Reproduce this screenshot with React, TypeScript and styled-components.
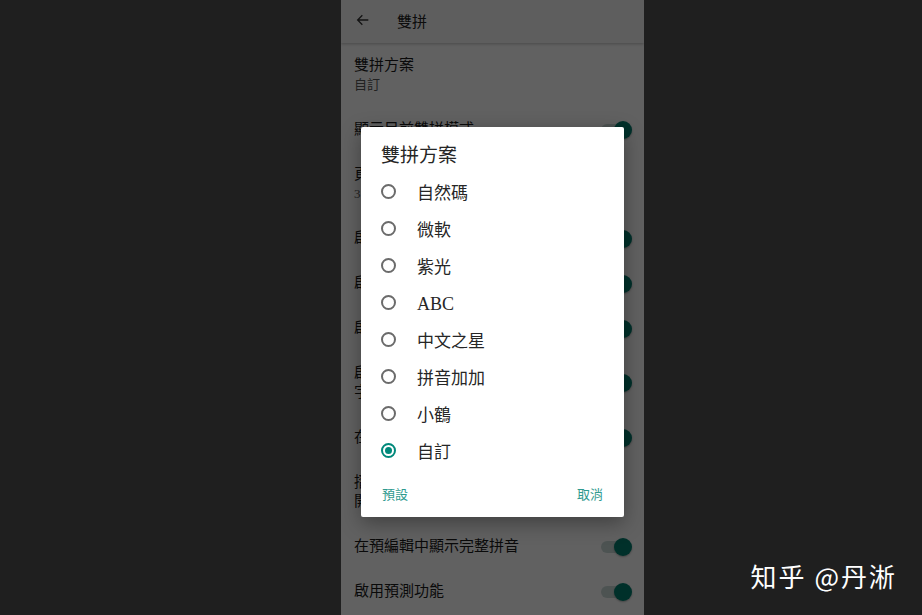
import styled, { createGlobalStyle } from "styled-components";

const GlobalStyle = createGlobalStyle`
  html, body {
    margin: 0;
    padding: 0;
    background: #1f1f1f;
  }
  * {
    box-sizing: border-box;
  }
`;

const Stage = styled.div`
  width: 922px;
  height: 615px;
  display: flex;
  padding-left: 341px;
  background: #1f1f1f;
  font-family: "Liberation Serif", "Noto Sans CJK TC", serif;
  overflow: hidden;
`;

const Phone = styled.div`
  position: relative;
  width: 303px;
  height: 615px;
  background: #fafafa;
  display: flex;
  flex-direction: column;
  overflow: hidden;
`;

const Header = styled.div`
  height: 43px;
  flex: none;
  display: flex;
  align-items: center;
  padding: 0 0 3px 14px;
  gap: 26px;
  background: #f3f3f3;
  box-shadow: 0 1px 3px rgba(0, 0, 0, 0.25);
  color: #222;
  font-size: 15px;
`;

const BackIcon = styled.svg`
  width: 16px;
  height: 16px;
  display: block;
`;

const List = styled.div`
  display: flex;
  flex-direction: column;
`;

const Row = styled.div<{ $tall?: boolean }>`
  height: ${(p) => (p.$tall ? 64 : 45)}px;
  flex: none;
  display: flex;
  align-items: center;
  padding: 0 13px;
  gap: 12px;
`;

const RowText = styled.div`
  flex: 1;
  min-width: 0;
  display: flex;
  flex-direction: column;
`;

const RowTitle = styled.div`
  font-size: 15px;
  line-height: 19px;
  color: #1c1c1c;
  white-space: pre-line;
`;

const RowSub = styled.div`
  font-size: 13px;
  line-height: 20px;
  color: #555;
`;

const Toggle = styled.div`
  position: relative;
  width: 30px;
  height: 12px;
  border-radius: 6px;
  background: #c6d6d4;
  flex: none;
  &::after {
    content: "";
    position: absolute;
    right: -1px;
    top: -3px;
    width: 18px;
    height: 18px;
    border-radius: 50%;
    background: #007d6e;
    box-shadow: 0 1px 2px rgba(0, 0, 0, 0.3);
  }
`;

const Scrim = styled.div`
  position: absolute;
  inset: 0;
  background: rgba(0, 0, 0, 0.61);
`;

const Dialog = styled.div`
  position: absolute;
  left: 20px;
  top: 127px;
  width: 263px;
  height: 390px;
  background: #fff;
  border-radius: 2px;
  box-shadow: 0 6px 20px rgba(0, 0, 0, 0.35);
  display: flex;
  flex-direction: column;
  padding-top: 17px;
`;

const DialogTitle = styled.div`
  padding: 0 20px;
  font-size: 19px;
  line-height: 24px;
  color: #262626;
`;

const Options = styled.div`
  margin-top: 5px;
  display: flex;
  flex-direction: column;
`;

const Option = styled.div`
  height: 37px;
  display: flex;
  align-items: center;
  padding-left: 20px;
  gap: 21px;
  font-size: 17px;
  color: #262626;
`;

const OptionLabel = styled.span<{ $latin?: boolean }>`
  font-size: ${(p) => (p.$latin ? 18 : 17)}px;
  position: relative;
  top: ${(p) => (p.$latin ? 2 : 0)}px;
`;

const Radio = styled.span<{ $on?: boolean }>`
  width: 15px;
  height: 15px;
  border-radius: 50%;
  border: 2px solid ${(p) => (p.$on ? "#00897b" : "#6b6b6b")};
  display: flex;
  align-items: center;
  justify-content: center;
  flex: none;
  &::after {
    content: "";
    width: 7px;
    height: 7px;
    border-radius: 50%;
    background: ${(p) => (p.$on ? "#00897b" : "transparent")};
  }
`;

const Footer = styled.div`
  flex: 1;
  display: flex;
  align-items: center;
  justify-content: space-between;
  padding: 0 21px 0 21px;
`;

const TextButton = styled.span`
  font-size: 13px;
  color: #2f9a8f;
`;

const Side = styled.div`
  flex: 1;
  display: flex;
  align-items: flex-end;
  justify-content: flex-end;
  padding: 0 25px 21px 0;
`;

const Watermark = styled.div`
  font-family: "Noto Sans CJK SC", sans-serif;
  font-size: 26px;
  color: #fff;
  letter-spacing: 2px;
`;

const rows: { title: string; sub?: string; toggle?: boolean; tall?: boolean }[] = [
  { title: "雙拼方案", sub: "自訂", tall: true },
  { title: "顯示目前雙拼模式", toggle: true },
  { title: "頁面大小", sub: "3", tall: true },
  { title: "啟用模糊拼音", toggle: true },
  { title: "啟用簡拼", toggle: true },
  { title: "啟用全拼", toggle: true },
  { title: "啟用雙拼時顯示\n字根提示", toggle: true, tall: true },
  { title: "在候選詞中顯示拼音", toggle: true },
  { title: "摺疊候選詞\n開啟時自動展開", tall: true },
  { title: "在預編輯中顯示完整拼音", toggle: true },
  { title: "啟用預測功能", toggle: true },
];

const options = ["自然碼", "微軟", "紫光", "ABC", "中文之星", "拼音加加", "小鶴", "自訂"];

export default function App() {
  return (
    <>
      <GlobalStyle />
      <Stage>
        <Phone>
          <Header>
            <BackIcon viewBox="0 0 24 24" fill="none" stroke="#333" strokeWidth="2">
              <path d="M20 12H5M11 5l-7 7 7 7" />
            </BackIcon>
            <span>雙拼</span>
          </Header>
          <List>
            {rows.map((r) => (
              <Row key={r.title} $tall={r.tall}>
                <RowText>
                  <RowTitle>{r.title}</RowTitle>
                  {r.sub && <RowSub>{r.sub}</RowSub>}
                </RowText>
                {r.toggle && <Toggle />}
              </Row>
            ))}
          </List>
          <Scrim />
          <Dialog>
            <DialogTitle>雙拼方案</DialogTitle>
            <Options>
              {options.map((o) => (
                <Option key={o}>
                  <Radio $on={o === "自訂"} />
                  <OptionLabel $latin={o === "ABC"}>{o}</OptionLabel>
                </Option>
              ))}
            </Options>
            <Footer>
              <TextButton>預設</TextButton>
              <TextButton>取消</TextButton>
            </Footer>
          </Dialog>
        </Phone>
        <Side>
          <Watermark>知乎 @丹淅</Watermark>
        </Side>
      </Stage>
    </>
  );
}
